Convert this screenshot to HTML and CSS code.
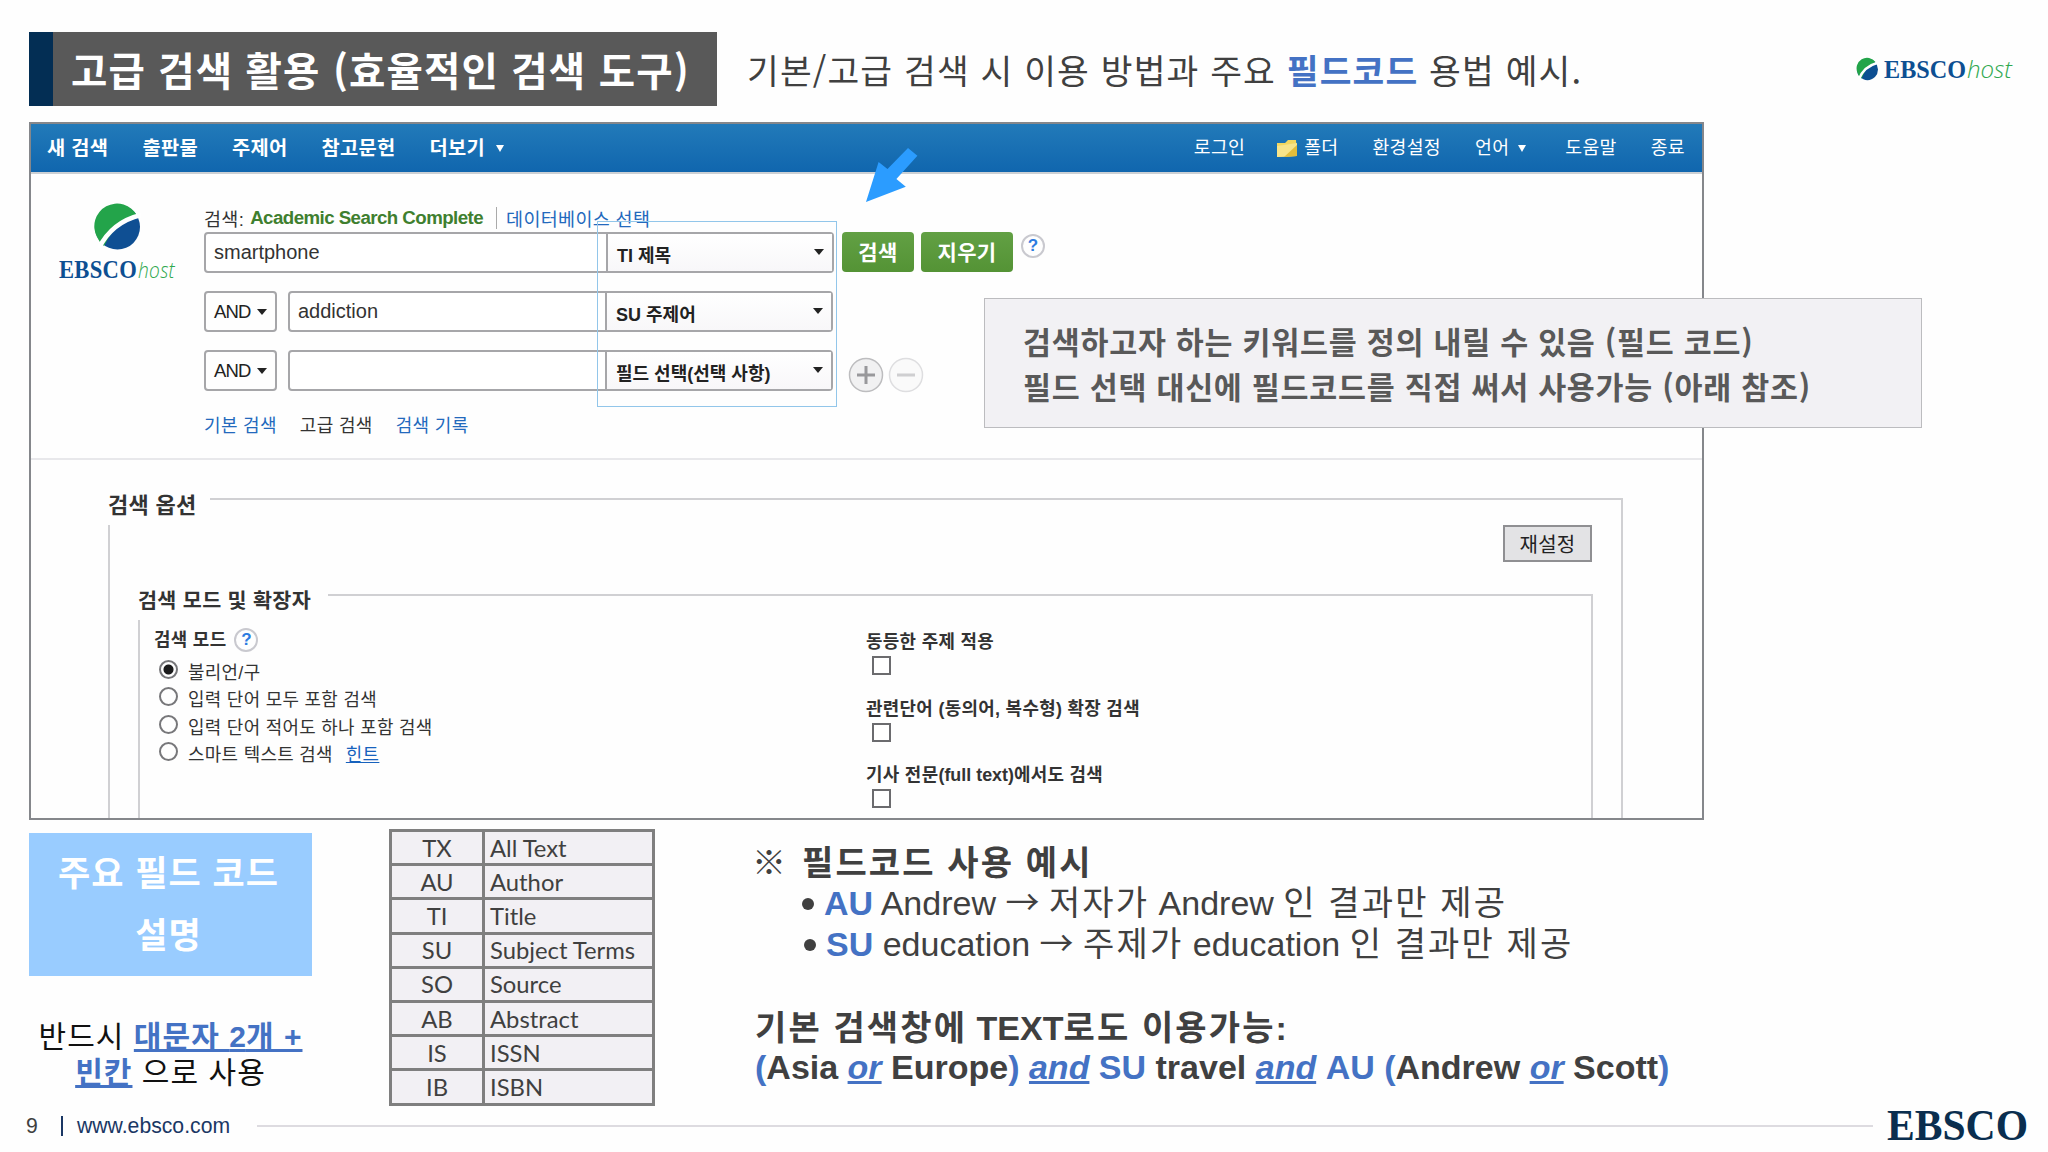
FILE: index.html
```html
<!DOCTYPE html>
<html lang="ko">
<head>
    <meta charset="UTF-8">
    <meta name="viewport" content="width=device-width, initial-scale=1.0">
    <title>고급 검색 활용</title>
    <link rel="stylesheet" href="styles.css">
</head>
<body>

<div class="slide">

    <!-- Title -->
    <header class="slide-header">
        <h1>고급 검색 활용 (효율적인 검색 도구)</h1>
        <p class="subtitle">기본/고급 검색 시 이용 방법과 주요 <b>필드코드</b> 용법 예시.</p>
        <svg class="brand" viewBox="0 -10 170 50" width="170" height="50">
            <ellipse cx="12.500" cy="15.500" rx="10.500" ry="10.700" fill="#0d4f92"/>
            <path d="M2.600 19 A10.500 10.700 0 0 1 20.500 8 Q12 11 6.500 24.500 Q3.400 22.500 2.600 19Z" fill="#23a44a"/>
            <path d="M4 25 Q9 12.500 22 9" fill="none" stroke="#fff" stroke-width="2.400"/>
            <text class="logo-serif" x="29" y="24" font-size="26" textLength="82" lengthAdjust="spacingAndGlyphs">EBSCO</text>
            <text class="logo-host" x="112" y="24" font-size="24" textLength="45" lengthAdjust="spacingAndGlyphs">host</text>
        </svg>
    </header>

    <!-- Search screen -->
    <section class="screen">
        <nav class="topbar">
            <ul class="menu">
                <li>새 검색</li>
                <li>출판물</li>
                <li>주제어</li>
                <li>참고문헌</li>
                <li>더보기 <span class="caret-small"></span></li>
            </ul>
            <ul class="menu menu-right">
                <li>로그인</li>
                <li class="folder-item">
                    <svg class="folder" viewBox="0 0 22 19" width="22" height="19">
                        <path d="M1 4 L9 4 L12 1 L20 1 L21 17 L1 18Z" fill="#f3d760"/>
                        <path d="M1 7 L21 4 L21 17 L1 18Z" fill="#f8e48a"/>
                        <path d="M8 18 L21 6 L21 17Z" fill="#e2bd3c"/>
                    </svg>폴더</li>
                <li>환경설정</li>
                <li class="language">언어 <span class="caret-small"></span></li>
                <li>도움말</li>
                <li>종료</li>
            </ul>
        </nav>

        <div class="search">
            <svg class="search-logo" viewBox="0 0 130 100" width="130" height="100">
                <ellipse cx="60.500" cy="28" rx="22.500" ry="22.500" fill="#0f4f93"/>
                <path d="M40 38 A22.500 22.500 0 0 1 80 16.500 Q60 21 47 47 Q42 43 40 38Z" fill="#23a44a"/>
                <path d="M42 49 Q55 23 84 16" fill="none" stroke="#fff" stroke-width="4.500"/>
                <text class="logo-serif" x="2" y="79" font-size="25" textLength="78" lengthAdjust="spacingAndGlyphs">EBSCO</text>
                <text class="logo-host" x="81" y="79" font-size="22" textLength="37" lengthAdjust="spacingAndGlyphs">host</text>
            </svg>

            <div class="search-form">
                <div class="search-label">
                    <span>검색:</span>
                    <b>Academic Search Complete</b>
                    <a class="db-link">데이터베이스 선택</a>
                </div>
                <div class="row">
                    <div class="field field-first">
                        <span class="value">smartphone</span>
                        <span class="select">TI 제목<i class="caret"></i></span>
                    </div>
                    <span class="btn">검색</span>
                    <span class="btn btn-wide">지우기</span>
                    <span class="help">?</span>
                </div>
                <div class="row">
                    <span class="operator">AND<i class="caret"></i></span>
                    <div class="field">
                        <span class="value">addiction</span>
                        <span class="select">SU 주제어<i class="caret"></i></span>
                    </div>
                </div>
                <div class="row">
                    <span class="operator">AND<i class="caret"></i></span>
                    <div class="field">
                        <span class="value"></span>
                        <span class="select">필드 선택(선택 사항)<i class="caret"></i></span>
                    </div>
                    <svg class="row-tools" viewBox="0 0 78 36" width="78" height="36">
                        <circle cx="18" cy="18" r="16.500" fill="#f1f1f2" stroke="#bdbdbf" stroke-width="1.500"/>
                        <path d="M9 18H27M18 9V27" stroke="#98989b" stroke-width="3"/>
                        <circle cx="58" cy="18" r="16.500" fill="#fafafa" stroke="#dedee0" stroke-width="1.500"/>
                        <path d="M49 18H67" stroke="#cfcfd1" stroke-width="3"/>
                    </svg>
                </div>
                <div class="modes">
                    <a>기본 검색</a>
                    <span>고급 검색</span>
                    <a>검색 기록</a>
                </div>
            </div>
        </div>

        <div class="group options">
            <div class="legend"><h2>검색 옵션</h2><span class="line"></span></div>
            <div class="group-body">
                <div class="reset-row"><span class="reset">재설정</span></div>
                <div class="group expanders">
                    <div class="legend"><h2>검색 모드 및 확장자</h2><span class="line"></span></div>
                    <div class="group-body columns">
                        <div class="modes-col">
                            <h3>검색 모드 <span class="help">?</span></h3>
                            <label><i class="radio checked"></i>불리언/구</label>
                            <label><i class="radio"></i>입력 단어 모두 포함 검색</label>
                            <label><i class="radio"></i>입력 단어 적어도 하나 포함 검색</label>
                            <label><i class="radio"></i>스마트 텍스트 검색 <a class="hint">힌트</a></label>
                        </div>
                        <div class="limits-col">
                            <h3>동등한 주제 적용</h3>
                            <i class="check"></i>
                            <h3>관련단어 (동의어, 복수형) 확장 검색</h3>
                            <i class="check"></i>
                            <h3>기사 전문<span class="en">(full text)</span>에서도 검색</h3>
                            <i class="check"></i>
                        </div>
                    </div>
                </div>
            </div>
        </div>
    </section>

    <!-- Field codes -->
    <section class="codes">
        <div class="codes-left">
            <div class="codes-title">주요 필드 코드<br>설명</div>
            <p class="codes-note">반드시 <b>대문자 <span class="en">2</span>개 +</b><br><b>빈칸</b> 으로 사용</p>
        </div>
        <table class="codes-table">
            <tr><td>TX</td><td>All Text</td></tr>
            <tr><td>AU</td><td>Author</td></tr>
            <tr><td>TI</td><td>Title</td></tr>
            <tr><td>SU</td><td>Subject Terms</td></tr>
            <tr><td>SO</td><td>Source</td></tr>
            <tr><td>AB</td><td>Abstract</td></tr>
            <tr><td>IS</td><td>ISSN</td></tr>
            <tr><td>IB</td><td>ISBN</td></tr>
        </table>
        <div class="examples">
            <p class="strong first"><span class="mark">※</span><span class="ko">필드코드 사용 예시</span></p>
            <p class="item"><i class="dot"></i><b>AU</b> Andrew <span class="arrow">→</span> <span class="ko">저자가</span> Andrew <span class="ko">인 결과만 제공</span></p>
            <p class="item item-su"><i class="dot"></i><b>SU</b> education <span class="arrow">→</span> <span class="ko">주제가</span> education <span class="ko">인 결과만 제공</span></p>
            <p class="strong spaced"><span class="ko">기본 검색창에</span> TEXT<span class="ko">로도 이용가능</span>:</p>
            <p class="strong query"><b>(</b>Asia <em>or</em> Europe<b>)</b> <em>and</em> <b>SU</b> travel <em>and</em> <b>AU</b> <b>(</b>Andrew <em>or</em> Scott<b>)</b></p>
        </div>
    </section>

    <footer class="slide-footer">
        <span class="page">9</span>
        <span class="bar"></span>
        <span class="site">www.ebsco.com</span>
        <span class="rule"></span>
        <svg viewBox="0 -4 150 44" width="150" height="44">
            <text class="logo-dark" x="1" y="32" font-size="44" textLength="141" lengthAdjust="spacingAndGlyphs">EBSCO</text>
        </svg>
    </footer>

    <!-- Annotations over the search screen -->
    <div class="highlight"></div>
    <svg class="pointer" viewBox="0 0 54 56" width="54" height="56">
        <path d="M1 55 L13.600 15 L22.500 22 L43 1 L52.400 8.700 L31.400 32 L40.800 39.700Z" fill="#2b9cff"/>
    </svg>
    <div class="callout">검색하고자 하는 키워드를 정의 내릴 수 있음 (필드 코드)<br>필드 선택 대신에 필드코드를 직접 써서 사용가능 (아래 참조)</div>
</div>

</body>
</html>
```
FILE: styles.css
```css
* {
    box-sizing: border-box;
}
body {
    margin: 0;
    background-color: #fefefe;
    color: #404040;
    font-family: "Liberation Sans", "Noto Sans CJK KR", sans-serif;
}
h1, h2, h3, p, ul {
    margin: 0;
    padding: 0;
}
i {
    font-style: normal;
}
.slide {
    position: relative;
    width: 2048px;
    height: 1152px;
    overflow: hidden;
    padding: 32px 0 0 29px;
    white-space: nowrap;
}

/* Header */
.slide-header {
    display: flex;
    align-items: center;
    height: 74px;
}
h1 {
    width: 688px;
    height: 74px;
    border-left: 24px solid #032e54;
    background-color: #595959;
    color: #fff;
    padding-left: 18px;
    font: bold 39.5px/74px "Noto Sans CJK KR", sans-serif;
    letter-spacing: 0.03em;
}
.subtitle {
    margin-left: 30px;
    font: 34.5px/76px "Noto Sans CJK KR", sans-serif;
    letter-spacing: 0.033em;
}
.subtitle b {
    color: #4472c4;
}
.brand {
    margin: 0 23px 0 auto;
}
.logo-serif {
    font-family: "Liberation Serif", serif;
    font-weight: bold;
    fill: #0d4f92;
}
.logo-host {
    font-family: "Open Sans", sans-serif;
    font-style: italic;
    font-weight: 300;
    fill: #2fa84f;
}

/* Search screen */
.screen {
    width: 1675px;
    height: 698px;
    margin-top: 16px;
    border: 2px solid #85878b;
    overflow: hidden;
    color: #333;
    letter-spacing: 0.02em;
}
.topbar {
    display: flex;
    justify-content: space-between;
    height: 50px;
    padding: 0 17px 0 16px;
    background: linear-gradient(#227ab9, #1066ae);
    border-bottom: 2px solid #ccd0d4;
    color: #fff;
}
.menu {
    display: flex;
    gap: 34px;
    list-style: none;
    font-size: 19.8px;
    font-weight: bold;
    line-height: 46px;
}
.menu-right {
    font-size: 18.3px;
    font-weight: normal;
}
.menu li {
    display: flex;
    align-items: center;
}
.caret-small {
    margin-left: 11px;
    border: 4px solid transparent;
    border-top: 7px solid #fff;
    border-bottom: 0;
}
.menu-right .caret-small {
    margin-left: 9px;
}
.menu .folder-item {
    margin-left: -3px;
}
.menu .language {
    margin-right: 5px;
}
.folder {
    margin-right: 6px;
}
.search {
    display: flex;
    height: 286px;
    border-bottom: 2px solid #e8e8eb;
}
.search-logo {
    margin: 25px 17px 0 26px;
}
.search-form {
    padding-top: 30px;
}
.search-label {
    display: flex;
    align-items: center;
    height: 28px;
    font-size: 18.5px;
}
.search-label b {
    margin-left: 6px;
    padding-right: 13px;
    border-right: 1px solid #aaa;
    color: #3f7f2f;
    font-size: 18.7px;
    letter-spacing: -0.55px;
}
.search a {
    color: #2369bd;
}
.search-label .db-link {
    margin-left: 9px;
}
.row {
    display: flex;
    height: 41px;
    margin-bottom: 18px;
}
.operator {
    display: flex;
    align-items: center;
    gap: 6px;
    width: 73px;
    margin-right: 11px;
    padding-left: 8px;
    border: 2px solid #a6a6a9;
    border-radius: 4px;
    font-size: 18.5px;
    letter-spacing: -0.8px;
    color: #222;
}
.caret {
    border: 5px solid transparent;
    border-top: 6px solid #222;
    border-bottom: 0;
}
.field {
    display: flex;
    width: 545px;
    border: 2px solid #a6a6a9;
    border-radius: 4px;
    background-color: #fff;
}
.field-first {
    width: 630px;
}
.value {
    flex: 1;
    padding-left: 8px;
    font-size: 20px;
    line-height: 37px;
    letter-spacing: 0;
}
.select {
    display: flex;
    justify-content: space-between;
    align-items: center;
    width: 226px;
    padding: 2px 8px 0 9px;
    border-left: 2px solid #a6a6a9;
    background: linear-gradient(#fff, #f8f7f9);
    color: #222;
    font-size: 18px;
    font-weight: bold;
    letter-spacing: 0;
}
.select .caret {
    margin-top: -4px;
}
.btn {
    width: 72px;
    height: 40px;
    margin-left: 8px;
    border-radius: 4px;
    background: linear-gradient(#62a044, #549335);
    color: #fff;
    font-size: 21px;
    font-weight: bold;
    line-height: 42px;
    text-align: center;
}
.btn-wide {
    width: 92px;
    margin-left: 7px;
}
.help {
    display: inline-block;
    width: 24px;
    height: 24px;
    margin-left: 8px;
    border: 2px solid #c9c9cf;
    border-radius: 50%;
    color: #2c7be0;
    font-size: 17px;
    font-weight: bold;
    line-height: 20px;
    text-align: center;
    letter-spacing: 0;
}
.row-tools {
    margin: 7px 0 0 15px;
}
.row .help {
    margin-top: 2px;
}
.modes {
    display: flex;
    gap: 23px;
    font-size: 18px;
    line-height: 34px;
    margin-top: 3px;
}

/* Option groups */
.group {
    display: flex;
    flex-direction: column;
}
.options {
    margin: 38px 79px 0 77px;
    height: 322px;
}
.legend {
    display: flex;
    flex: none;
    height: 27px;
}
.legend h2 {
    font-size: 22px;
    line-height: 15px;
}
.legend .line {
    flex: 1;
    margin-left: 13px;
    border-top: 2px solid #d0d0d3;
    border-right: 2px solid #d0d0d3;
}
.group-body {
    flex: 1;
    border: solid #d0d0d3;
    border-width: 0 2px;
}
.reset-row {
    display: flex;
    justify-content: flex-end;
    padding-right: 29px;
}
.reset {
    width: 89px;
    height: 37px;
    border: 2px solid #8f8f92;
    background-color: #e3e3e5;
    color: #222;
    font-size: 20px;
    line-height: 37px;
    text-align: center;
}
.expanders {
    height: 240px;
    margin: 32px 28px 0;
}
.expanders .legend {
    height: 26px;
}
.expanders .legend h2 {
    font-size: 20.7px;
    line-height: 14px;
}
.expanders .legend .line {
    margin-left: 17px;
}
.columns {
    display: flex;
}
h3 {
    font-size: 17.9px;
    line-height: 24px;
}
.modes-col {
    width: 726px;
    padding: 8px 0 0 14px;
}
.modes-col h3 {
    display: flex;
    align-items: center;
    margin-bottom: 5px;
}
.modes-col label {
    display: flex;
    align-items: center;
    height: 27.5px;
    font-size: 17.9px;
}
.radio {
    width: 19px;
    height: 19px;
    margin: -3px 10px 0 5px;
    border: 2px solid #77777a;
    border-radius: 50%;
}
.radio.checked {
    background: radial-gradient(circle, #1c1c1c 4.5px, transparent 5.5px);
}
.hint {
    margin-left: 13px;
    color: #1762bd;
    text-decoration: underline;
}
.limits-col {
    padding-top: 10px;
}
.check {
    display: block;
    width: 19px;
    height: 19px;
    margin: 2px 0 21.5px 6px;
    border: 2px solid #6b6b6e;
    background-color: #fff;
}
.en {
    letter-spacing: 0;
}

/* Field codes */
.codes {
    display: flex;
    height: 284px;
}
.codes-left {
    width: 283px;
    padding-top: 13px;
    text-align: center;
}
.codes-title {
    height: 143px;
    padding: 10px 4px 0 0;
    background-color: #99ccff;
    color: #fff;
    font-size: 35px;
    font-weight: bold;
    line-height: 62px;
    letter-spacing: 0.03em;
}
.codes-note {
    margin-top: 43px;
    color: #111;
    font-size: 30px;
    line-height: 36px;
    letter-spacing: 0.035em;
}
.codes-note b, .examples b, .examples em {
    color: #4472c4;
}
.codes-note b {
    text-decoration: underline;
}
.codes-table {
    width: 266px;
    height: 275px;
    margin: 9px 0 0 77px;
    border-collapse: collapse;
    background-color: #f2f0f4;
    color: #404040;
    font: 23.8px/28px Lato, sans-serif;
}
.codes-table td {
    height: 34.2px;
    padding: 0 0 0 5px;
    border: 3px solid #7f7f7f;
}
.codes-table td:first-child {
    width: 93px;
    padding-left: 0;
    text-align: center;
}
.examples {
    margin: 24px 0 0 100px;
    font-size: 34px;
    line-height: 41px;
}
.ko {
    letter-spacing: 0.063em;
}
.strong {
    font-weight: bold;
}
.first {
    line-height: 39px;
}
.spaced {
    margin-top: 42.5px;
}
.query {
    margin-top: -1.5px;
}
.mark {
    display: inline-block;
    width: 50px;
    margin-left: -3px;
}
.item {
    padding-left: 47px;
}
.item-su {
    padding-left: 49px;
}
.dot {
    display: inline-block;
    width: 12px;
    height: 12px;
    margin: 0 10px 5px 0;
    border-radius: 50%;
    background-color: #404040;
}
.arrow {
    font-family: "Noto Sans CJK KR", sans-serif;
    line-height: 1;
}
.examples em {
    text-decoration: underline;
}

/* Footer */
.slide-footer {
    display: flex;
    align-items: center;
    height: 44px;
    padding-right: 12px;
    font-size: 21.2px;
}
.page {
    width: 32px;
    margin-left: -3px;
}
.bar {
    width: 2px;
    height: 20px;
    margin: 0 14px 0 3px;
    background-color: #1a3764;
}
.site {
    color: #1a3764;
}
.rule {
    flex: 1;
    height: 2px;
    margin: 0 13px 0 27px;
    background-color: #dddbe0;
}
.logo-dark {
    font-family: "Liberation Serif", serif;
    font-weight: bold;
    fill: #0a2e4f;
}

/* Annotations */
.highlight {
    position: absolute;
    left: 597px;
    top: 221px;
    width: 240px;
    height: 186px;
    border: 1px solid #92c6ea;
}
.pointer {
    position: absolute;
    left: 865px;
    top: 147px;
}
.callout {
    position: absolute;
    left: 984px;
    top: 298px;
    width: 938px;
    height: 130px;
    padding: 20px 0 0 38px;
    border: 1px solid #bcbcbf;
    background-color: #f2f1f4;
    color: #595959;
    font: bold 30.4px/45px "Noto Sans CJK KR", sans-serif;
    letter-spacing: 0.025em;
}
```
